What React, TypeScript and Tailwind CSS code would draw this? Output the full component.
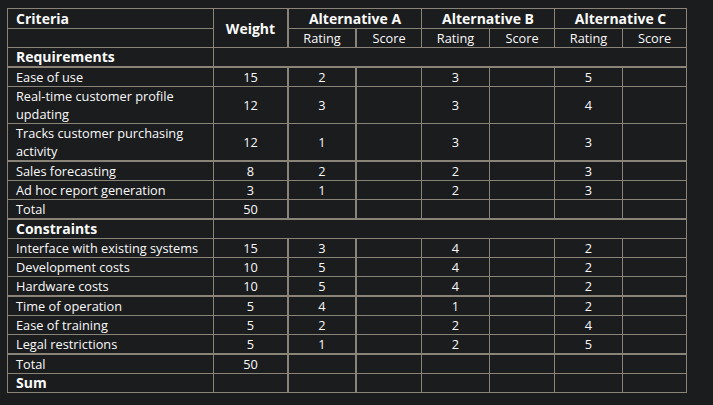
import React from "react";

type Row = {
  label: string;
  weight?: string;
  a?: string;
  b?: string;
  c?: string;
  thick?: boolean; // 2px bottom rule under this row
  bold?: boolean;
};

const requirements: Row[] = [
  { label: "Ease of use", weight: "15", a: "2", b: "3", c: "5" },
  { label: "Real-time customer profile updating", weight: "12", a: "3", b: "3", c: "4" },
  { label: "Tracks customer purchasing activity", weight: "12", a: "1", b: "3", c: "3", thick: true },
  { label: "Sales forecasting", weight: "8", a: "2", b: "2", c: "3" },
  { label: "Ad hoc report generation", weight: "3", a: "1", b: "2", c: "3" },
  { label: "Total", weight: "50", thick: true },
];

const constraints: Row[] = [
  { label: "Interface with existing systems", weight: "15", a: "3", b: "4", c: "2" },
  { label: "Development costs", weight: "10", a: "5", b: "4", c: "2" },
  { label: "Hardware costs", weight: "10", a: "5", b: "4", c: "2", thick: true },
  { label: "Time of operation", weight: "5", a: "4", b: "1", c: "2" },
  { label: "Ease of training", weight: "5", a: "2", b: "2", c: "4" },
  { label: "Legal restrictions", weight: "5", a: "1", b: "2", c: "5", thick: true },
  { label: "Total", weight: "50" },
  { label: "Sum", bold: true },
];

const DataRow: React.FC<{ row: Row }> = ({ row }) => {
  const bb = row.thick ? "border-b-2" : "border-b";
  const cell = `${bb} border-[#8a8478] p-0 text-center align-middle`;
  return (
    <tr>
      <td
        className={`${bb} border-r border-[#8a8478] pl-[8px] pr-[6px] text-left align-middle ${
          row.bold ? "font-bold text-[14px]" : ""
        }`}
      >
        {row.label}
      </td>
      <td className={`${cell} border-r-2`}>{row.weight}</td>
      <td className={`${cell} border-r-2`}>{row.a}</td>
      <td className={`${cell} border-r`}></td>
      <td className={`${cell} border-r`}>{row.b}</td>
      <td className={`${cell} border-r`}></td>
      <td className={`${cell} border-r`}>{row.c}</td>
      <td className={`${cell} border-r`}></td>
    </tr>
  );
};

const SectionRow: React.FC<{ title: string; thick?: boolean }> = ({ title, thick }) => {
  const bb = thick ? "border-b-2" : "border-b";
  return (
    <tr>
      <td className={`${bb} border-r border-[#8a8478] pl-[8px] text-left font-bold text-[14px] align-middle`}>
        {title}
      </td>
      <td colSpan={7} className={`${bb} border-r border-[#8a8478]`}></td>
    </tr>
  );
};

export default function App() {
  return (
    <div className="min-h-screen bg-[#1b1c1e] pl-[7px] pt-[8px] text-[#fafafa] font-['Open_Sans',sans-serif] text-[12.75px] leading-[18px]">
      <table className="table-fixed border-separate border-spacing-0 w-[680px] border-l border-t border-[#8a8478]">
        <colgroup>
          <col className="w-[206px]" />
          <col className="w-[75px]" />
          <col className="w-[68px]" />
          <col className="w-[65px]" />
          <col className="w-[68px]" />
          <col className="w-[65px]" />
          <col className="w-[68px]" />
          <col className="w-[64px]" />
        </colgroup>
        <thead>
          <tr className="font-bold text-[14px] leading-[19px]">
            <td className="border-b border-r border-[#8a8478] pl-[8px] text-left align-middle">Criteria</td>
            <td rowSpan={2} className="border-b border-r-2 border-[#8a8478] text-center align-middle">
              Weight
            </td>
            <td colSpan={2} className="border-b border-r border-[#8a8478] text-center">
              Alternative A
            </td>
            <td colSpan={2} className="border-b border-r border-[#8a8478] text-center">
              Alternative B
            </td>
            <td colSpan={2} className="border-b border-r border-[#8a8478] text-center">
              Alternative C
            </td>
          </tr>
          <tr>
            <td className="border-b border-r border-[#8a8478]"></td>
            <td className="border-b border-r-2 border-[#8a8478] text-center">Rating</td>
            <td className="border-b border-r border-[#8a8478] text-center">Score</td>
            <td className="border-b border-r border-[#8a8478] text-center">Rating</td>
            <td className="border-b border-r border-[#8a8478] text-center">Score</td>
            <td className="border-b border-r border-[#8a8478] text-center">Rating</td>
            <td className="border-b border-r border-[#8a8478] text-center">Score</td>
          </tr>
        </thead>
        <tbody>
          <SectionRow title="Requirements" thick />
          {requirements.map((r, i) => (
            <DataRow key={"r" + i} row={r} />
          ))}
          <SectionRow title="Constraints" />
          {constraints.map((r, i) => (
            <DataRow key={"c" + i} row={r} />
          ))}
        </tbody>
      </table>
    </div>
  );
}
